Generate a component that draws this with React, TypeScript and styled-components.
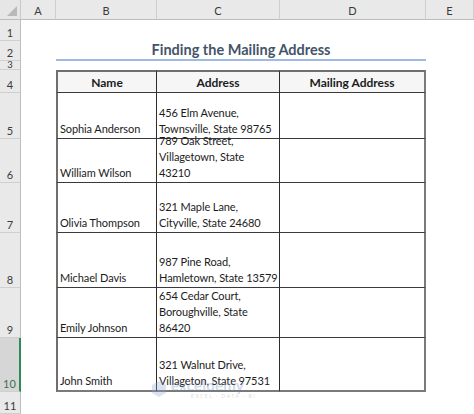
import React from "react";
import styled, { createGlobalStyle, css } from "styled-components";

const Global = createGlobalStyle`
  html, body { margin: 0; padding: 0; background: #fff; }
  body { font-family: "Lato", "Open Sans", sans-serif; overflow: hidden; }
`;

const COLS = [21, 35, 101, 123, 146, 48];
const ROWS = [20, 21, 20, 9, 23, 46, 44, 50, 55, 50, 54, 22];

const Sheet = styled.div`
  position: relative;
  display: grid;
  grid-template-columns: ${COLS.map((c) => c + "px").join(" ")};
  grid-template-rows: ${ROWS.map((r) => r + "px").join(" ")};
  width: 474px;
  height: 414px;
  overflow: hidden;
  background: #fff;
`;

const Corner = styled.div`
  position: relative;
  background: #e6e6e6;
  border-right: 1px solid #c9c9c9;
  border-bottom: 1px solid #bdbdbd;
  box-sizing: border-box;
  &::after {
    content: "";
    position: absolute;
    right: 3px;
    bottom: 3px;
    border-style: solid;
    border-width: 0 0 10px 10px;
    border-color: transparent transparent #b9b9b9 transparent;
  }
`;

const ColHead = styled.div`
  background: #e9e9e9;
  border-right: 1px solid #cfcfcf;
  border-bottom: 1px solid #bdbdbd;
  box-sizing: border-box;
  display: flex;
  align-items: center;
  justify-content: center;
  font-size: 11px;
  color: #3b3b3b;
  padding-top: 1px;
`;

const RowHead = styled.div<{ $sel?: boolean; $tight?: boolean }>`
  background: ${(p) => (p.$sel ? "#d6d6d6" : "#e9e9e9")};
  border-bottom: 1px solid #cfcfcf;
  border-right: ${(p) => (p.$sel ? "2px solid #2e8b57" : "1px solid #bdbdbd")};
  box-sizing: border-box;
  display: flex;
  align-items: ${(p) => (p.$tight ? "center" : "flex-end")};
  justify-content: center;
  font-size: ${(p) => (p.$tight ? "9.5px" : "11px")};
  color: ${(p) => (p.$sel ? "#3f6f55" : "#3b3b3b")};
  padding-bottom: ${(p) => (p.$tight ? "0" : "2px")};
  line-height: ${(p) => (p.$tight ? "8px" : "1")};
  overflow: visible;
`;

const Blank = styled.div``;

const TitleCell = styled.div`
  grid-column: span 3;
  display: flex;
  align-items: flex-end;
  justify-content: center;
  font-weight: 700;
  font-size: 14.5px;
  color: #44546a;
  border-bottom: 2px solid #9fbbe3;
  box-sizing: border-box;
  padding-bottom: 1px;
`;

const Cell = styled.div<{ $head?: boolean; $first?: boolean; $last?: boolean; $top?: boolean; $bottom?: boolean }>`
  box-sizing: border-box;
  display: flex;
  align-items: flex-end;
  font-size: 11px;
  line-height: 16px;
  letter-spacing: -0.1px;
  white-space: pre;
  overflow: visible;
  color: #1c1c1c;
  padding: 0 2px 1px 2px;
  border-right: 1px solid #2d2d2d;
  border-bottom: 1px solid #3a3a3a;
  background: #fff;
  ${(p) => p.$first && css`border-left: 2px solid #6f6f6f;`}
  ${(p) => p.$last && css`border-right: 2px solid #7a7a7a;`}
  ${(p) => p.$top && css`border-top: 2px solid #6f6f6f;`}
  ${(p) => p.$bottom && css`border-bottom: 2px solid #7a7a7a;`}
  ${(p) =>
    p.$head &&
    css`
      background: #f6f6f6;
      font-weight: 700;
      font-size: 12px;
      letter-spacing: 0;
      justify-content: center;
      align-items: center;
      padding-top: 2px;
    `}
`;

const Watermark = styled.div`
  position: absolute;
  left: 150px;
  top: 378px;
  display: flex;
  align-items: center;
  gap: 3px;
  opacity: 0.3;
  pointer-events: none;
`;

const WmText = styled.div`
  display: flex;
  flex-direction: column;
  line-height: 1;
`;

const WmBig = styled.span`
  font-size: 15px;
  font-weight: 700;
  color: #6b86b8;
  letter-spacing: 0.2px;
`;

const WmSmall = styled.span`
  font-size: 5px;
  color: #8a8a8a;
  letter-spacing: 1.5px;
  margin-top: 1px;
  margin-left: 20px;
`;

const data = [
  ["Sophia Anderson", "456 Elm Avenue,\nTownsville, State 98765"],
  ["William Wilson", "789 Oak Street,\nVillagetown, State\n43210"],
  ["Olivia Thompson", "321 Maple Lane,\nCityville, State 24680"],
  ["Michael Davis", "987 Pine Road,\nHamletown, State 13579"],
  ["Emily Johnson", "654 Cedar Court,\nBoroughville, State\n86420"],
  ["John Smith", "321 Walnut Drive,\nVillageton, State 97531"],
];

export default function App() {
  return (
    <>
      <Global />
      <Sheet>
        <Corner />
        {["A", "B", "C", "D", "E"].map((c) => (
          <ColHead key={c}>{c}</ColHead>
        ))}

        <RowHead>1</RowHead>
        <Blank />
        <Blank />
        <Blank />
        <Blank />
        <Blank />

        <RowHead>2</RowHead>
        <Blank />
        <TitleCell>Finding the Mailing Address</TitleCell>
        <Blank />

        <RowHead $tight>3</RowHead>
        <Blank />
        <Blank />
        <Blank />
        <Blank />
        <Blank />

        <RowHead>4</RowHead>
        <Blank />
        <Cell $head $first $top>Name</Cell>
        <Cell $head $top>Address</Cell>
        <Cell $head $top $last>Mailing Address</Cell>
        <Blank />

        {data.map(([name, addr], i) => {
          const bottom = i === data.length - 1;
          return (
            <React.Fragment key={name}>
              <RowHead $sel={i === 5}>{i + 5}</RowHead>
              <Blank />
              <Cell $first $bottom={bottom}>{name}</Cell>
              <Cell $bottom={bottom}>{addr}</Cell>
              <Cell $last $bottom={bottom} />
              <Blank />
            </React.Fragment>
          );
        })}

        <RowHead>11</RowHead>
        <Blank />
        <Blank />
        <Blank />
        <Blank />
        <Blank />

        <Watermark>
          <svg width="18" height="18" viewBox="0 0 18 18">
            <polygon points="9,1 16,5 16,13 9,17 2,13 2,5" fill="#8fa6cf" />
          </svg>
          <WmText>
            <WmBig>exceldemy</WmBig>
            <WmSmall>EXCEL · DATA · BI</WmSmall>
          </WmText>
        </Watermark>
      </Sheet>
    </>
  );
}
